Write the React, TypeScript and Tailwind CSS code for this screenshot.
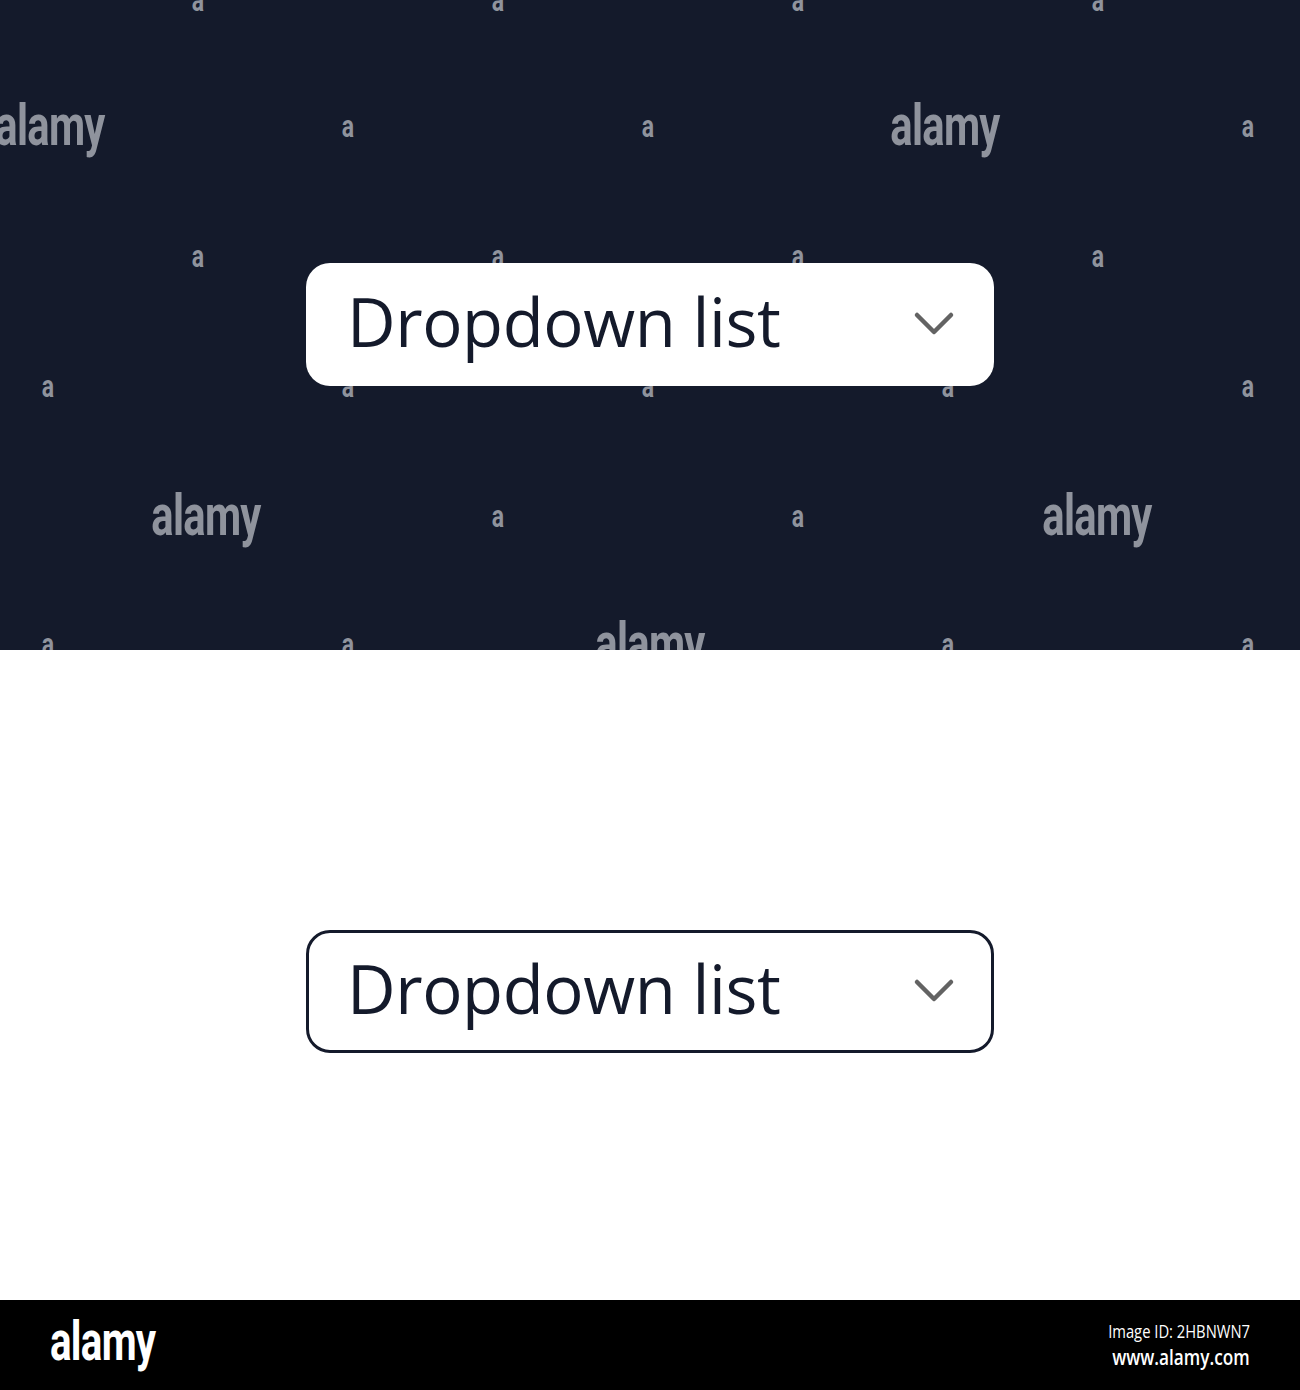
import React from "react";

const Chevron = () => (
  <svg width="44" height="30" viewBox="0 0 44 30" className="shrink-0">
    <polyline
      points="5,5 22,22 39,5"
      fill="none"
      stroke="#636363"
      strokeWidth="4.5"
      strokeLinecap="round"
      strokeLinejoin="round"
    />
  </svg>
);

type Variant = "filled" | "outline";

const Dropdown = ({ variant }: { variant: Variant }) => (
  <button
    type="button"
    className={
      variant === "filled"
        ? "relative z-10 flex h-[123px] w-[688px] items-center justify-between rounded-[24px] bg-white pl-[41px] pr-[38px]"
        : "relative z-10 flex h-[123px] w-[688px] items-center justify-between rounded-[24px] border-[3px] border-[#141a2b] bg-white pl-[38px] pr-[35px]"
    }
  >
    <span
      className="text-[#141a2b] text-[67px] leading-none tracking-[-0.4px] pb-[6px]"
      style={{ fontFamily: "'Open Sans', 'Noto Sans', sans-serif" }}
    >
      Dropdown list
    </span>
    <Chevron />
  </button>
);

// faint stock marks scattered over the dark half
const marks: { x: number; y: number; word: boolean }[] = [
  { x: 198, y: 0, word: false },
  { x: 498, y: 0, word: false },
  { x: 798, y: 0, word: false },
  { x: 1098, y: 0, word: false },
  { x: 50, y: 125, word: true },
  { x: 348, y: 126, word: false },
  { x: 648, y: 126, word: false },
  { x: 945, y: 125, word: true },
  { x: 1248, y: 126, word: false },
  { x: 198, y: 256, word: false },
  { x: 498, y: 256, word: false },
  { x: 798, y: 256, word: false },
  { x: 1098, y: 256, word: false },
  { x: 48, y: 386, word: false },
  { x: 348, y: 386, word: false },
  { x: 648, y: 386, word: false },
  { x: 948, y: 386, word: false },
  { x: 1248, y: 386, word: false },
  { x: 206, y: 515, word: true },
  { x: 498, y: 516, word: false },
  { x: 798, y: 516, word: false },
  { x: 1097, y: 515, word: true },
  { x: 48, y: 644, word: false },
  { x: 348, y: 644, word: false },
  { x: 650, y: 643, word: true },
  { x: 948, y: 644, word: false },
  { x: 1248, y: 644, word: false },
];

const Mark = ({ x, y, word }: { x: number; y: number; word: boolean }) => (
  <span
    className={
      word
        ? "absolute -translate-x-1/2 -translate-y-1/2 scale-x-[0.72] font-bold text-[58px] leading-none tracking-[-1px] text-[#8f939d]"
        : "absolute -translate-x-1/2 -translate-y-1/2 scale-x-[0.72] font-bold text-[32px] leading-none text-[#8f939d]"
    }
    style={{ left: x, top: y, fontFamily: "Roboto, 'Liberation Sans', sans-serif" }}
  >
    {word ? "alamy" : "a"}
  </span>
);

export default function App() {
  return (
    <div className="relative flex h-[1390px] w-[1300px] flex-col overflow-hidden bg-white">
      <section className="relative flex h-[650px] items-start justify-center overflow-hidden bg-[#141a2b] pt-[263px]">
        {marks.map((m, i) => (
          <Mark key={i} {...m} />
        ))}
        <Dropdown variant="filled" />
      </section>

      <section className="flex h-[650px] items-start justify-center bg-white pt-[280px]">
        <Dropdown variant="outline" />
      </section>

      <footer className="flex h-[90px] items-center justify-between bg-black pl-[50px] pr-[50px]">
        <span
          className="origin-left scale-x-[0.72] text-[56px] font-bold leading-none tracking-[-1px] text-white pb-[8px]"
          style={{ fontFamily: "Roboto, 'Liberation Sans', sans-serif" }}
        >
          alamy
        </span>
        <div
          className="flex flex-col items-end gap-[7px] text-white"
          style={{ fontFamily: "'Open Sans', 'Liberation Sans', sans-serif" }}
        >
          <span className="origin-right scale-x-[0.82] text-[18px] leading-none">Image ID: 2HBNWN7</span>
          <span className="origin-right scale-x-[0.82] text-[21px] font-semibold leading-none">www.alamy.com</span>
        </div>
      </footer>
    </div>
  );
}
